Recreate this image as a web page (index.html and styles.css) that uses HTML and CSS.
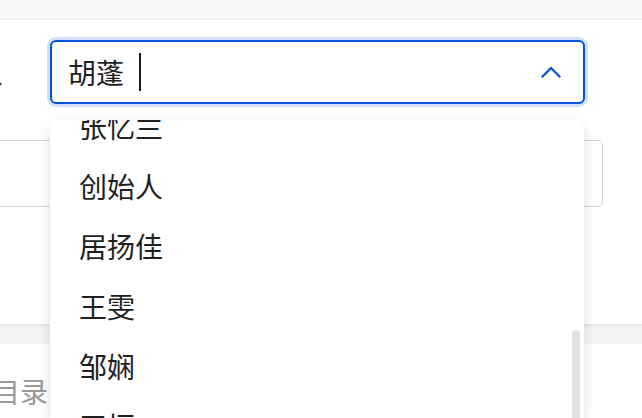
FILE: index.html
```html
<!DOCTYPE html>
<html lang="zh-CN">
<head>
<meta charset="utf-8">
<title>Select</title>
<link rel="stylesheet" href="styles.css">
</head>
<body>
<div class="topbar"></div>
<section class="panel">
  <div class="row">
    <div class="label"><span>负责人</span></div>
    <div class="trigger">
      <span class="value">胡蓬</span><span class="caret"></span>
      <svg class="chevron" width="20" height="12" viewBox="0 0 20 12"><polyline points="1.5,10.5 10,2 18.5,10.5" fill="none" stroke="#0052d9" stroke-width="2.2" stroke-linecap="square"/></svg>
    </div>
  </div>
  <div class="field"></div>
</section>
<section class="panel2">
  <div class="row2">
    <div class="label muted"><span>目录</span></div>
  </div>
</section>
<div class="menu">
  <ul class="list">
    <li class="item">张忆兰</li>
    <li class="item">创始人</li>
    <li class="item">居扬佳</li>
    <li class="item">王雯</li>
    <li class="item">邹娴</li>
    <li class="item">王恒</li>
  </ul>
  <div class="scrollbar"></div>
</div>
</body>
</html>
```
FILE: styles.css
```css
html, body {
  margin: 0;
  padding: 0;
}
body {
  width: 642px;
  height: 418px;
  overflow: hidden;
  background: #f4f4f4;
  font-family: "Noto Sans CJK SC", sans-serif;
  color: #1f1f1f;
  position: relative;
}
.topbar {
  height: 19px;
  background: #f7f7f7;
  border-bottom: 1px solid #efefef;
}
.panel {
  height: 304px;
  background: #fff;
  box-shadow: 0 2px 4px rgba(0, 0, 0, 0.07);
  position: relative;
  overflow: hidden;
}
.row {
  display: flex;
  align-items: center;
  gap: 47px;
  padding: 20px 0 0 3px;
}
.label {
  width: 0;
  display: flex;
  justify-content: flex-end;
  white-space: nowrap;
  font-size: 28px;
  line-height: 40px;
  color: #333;
}
.label.muted {
  color: #9a9a9a;
}
.trigger {
  box-sizing: border-box;
  width: 535px;
  height: 64px;
  border: 2px solid #0052d9;
  border-radius: 6px;
  box-shadow: 0 0 0 3px #d0e0fa;
  display: flex;
  align-items: center;
  padding: 0 22px 0 16px;
  font-size: 28px;
  background: #fff;
}
.value {
  line-height: 40px;
}
.caret {
  width: 2px;
  height: 38px;
  background: #1f1f1f;
  margin-left: 15px;
}
.chevron {
  margin-left: auto;
  display: block;
}
.field {
  box-sizing: border-box;
  margin: 36px 0 0 -10px;
  width: 613px;
  height: 67px;
  border: 1px solid #d4d4d4;
  border-radius: 5px;
}
.panel2 {
  margin-top: 20px;
  height: 80px;
  background: #fff;
}
.row2 {
  display: flex;
  padding: 27px 0 0 48px;
}
.menu {
  position: absolute;
  top: 120px;
  left: 50px;
  width: 534px;
  height: 298px;
  background: #fff;
  border-radius: 9px 9px 0 0;
  overflow: hidden;
  box-shadow: 0 3px 14px 2px rgba(0, 0, 0, 0.05), 0 8px 10px 1px rgba(0, 0, 0, 0.06), 0 5px 5px -3px rgba(0, 0, 0, 0.1);
}
.list {
  list-style: none;
  margin: -24px 0 0 0;
  padding: 0;
}
.item {
  height: 60px;
  line-height: 60px;
  padding-left: 29px;
  font-size: 28px;
  color: #1f1f1f;
}
.scrollbar {
  position: absolute;
  right: 4px;
  top: 210px;
  width: 8px;
  height: 100px;
  border-radius: 4px 4px 0 0;
  background: #e4e4e4;
}
```
